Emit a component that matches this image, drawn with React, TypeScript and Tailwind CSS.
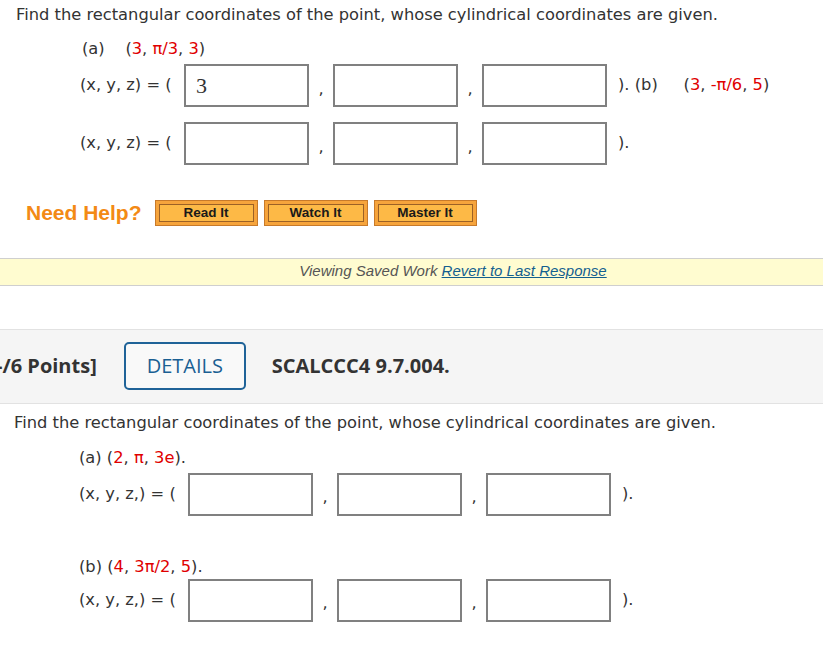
import React from 'react';

const V = { fontFamily: '"DejaVu Sans", Verdana, sans-serif' };
const OS = { fontFamily: '"Open Sans", sans-serif' };
const AR = { fontFamily: '"Liberation Sans", Arial, sans-serif' };

function R({ children }: { children: React.ReactNode }) {
  return <span className="text-[#e00000]">{children}</span>;
}

function Box({ value }: { value?: string }) {
  return (
    <div className="w-[125px] h-[43px] border-2 border-[#808080] bg-white flex items-center px-[10px]">
      {value && (
        <span className="text-[22px] text-[#333]" style={{ fontFamily: '"Liberation Serif", serif' }}>
          {value}
        </span>
      )}
    </div>
  );
}

function Comma() {
  return <span className="w-[24px] text-center self-end mb-[6px] text-[#333]">,</span>;
}

function Row({ label, boxStart, first, tail }: { label: string; boxStart: number; first?: string; tail: React.ReactNode }) {
  return (
    <div className="flex items-center">
      <span className="whitespace-pre" style={{ width: boxStart }}>{label}</span>
      <Box value={first} />
      <Comma />
      <Box />
      <Comma />
      <Box />
      <span className="ml-[11px] whitespace-pre">{tail}</span>
    </div>
  );
}

function HelpBtn({ label, w }: { label: string; w: number }) {
  return (
    <div className="h-[26px] border border-[#c87a2a] bg-[#f6a43c] p-[3px]" style={{ width: w }}>
      <div
        className="h-full border border-[#9c6126] bg-[#fdb946] flex items-center justify-center text-[13.5px] font-bold text-[#1a1a1a]"
        style={AR}
      >
        {label}
      </div>
    </div>
  );
}

export default function App() {
  return (
    <div className="w-[823px] h-[657px] overflow-hidden bg-white text-[#333] text-[16.3px]" style={V}>
      <div className="pl-[16px] pt-[4px] leading-[22px]">
        Find the rectangular coordinates of the point, whose cylindrical coordinates are given.
      </div>
      <div className="pl-[82px] mt-[12px] leading-[22px] whitespace-pre">
        (a)    (<R>3</R>, <R>π/3</R>, <R>3</R>)
      </div>
      <div className="pl-[80px] mt-[4px]">
        <Row
          label="(x, y, z) = ("
          boxStart={104}
          first="3"
          tail={
            <>
              ). (b)     (<R>3</R>, <R>-π/6</R>, <R>5</R>)
            </>
          }
        />
      </div>
      <div className="pl-[80px] mt-[15px]">
        <Row label="(x, y, z) = (" boxStart={104} tail=")." />
      </div>

      <div className="flex items-center gap-[6px] pl-[26px] mt-[32px]">
        <span className="text-[21px] font-bold text-[#f38a15] mr-[7px]" style={AR}>
          Need Help?
        </span>
        <HelpBtn label="Read It" w={103} />
        <HelpBtn label="Watch It" w={104} />
        <HelpBtn label="Master It" w={103} />
      </div>

      <div
        className="mt-[29px] h-[28px] border-y border-[#cfcfcf] bg-[#fffcd0] flex items-center justify-center text-[15px] italic text-[#555]"
        style={AR}
      >
        <span className="ml-[83px]">
          Viewing Saved Work{' '}
          <span className="underline text-[#135f8f]">Revert to Last Response</span>
        </span>
      </div>

      <div className="mt-[43px] h-[75px] border-y border-[#e2e2e2] bg-[#f5f5f5] flex items-center" style={OS}>
        <span className="ml-[-4px] text-[20px] font-bold text-[#333]">-/6 Points]</span>
        <div className="ml-[27px] w-[122px] h-[48px] border-2 border-[#1f6398] rounded-[5px] flex items-center justify-center text-[20px] text-[#1a5f93] bg-white/40">
          DETAILS
        </div>
        <span className="ml-[26px] text-[20px] font-bold text-[#333]">SCALCCC4 9.7.004.</span>
      </div>

      <div className="pl-[14px] mt-[8px] leading-[22px]">
        Find the rectangular coordinates of the point, whose cylindrical coordinates are given.
      </div>
      <div className="pl-[79px] mt-[13px] leading-[22px]">
        (a) (<R>2</R>, <R>π</R>, <R>3e</R>).
      </div>
      <div className="pl-[79px] mt-[4px]">
        <Row label="(x, y, z,) = (" boxStart={109} tail=")." />
      </div>
      <div className="pl-[79px] mt-[40px] leading-[22px]">
        (b) (<R>4</R>, <R>3π/2</R>, <R>5</R>).
      </div>
      <div className="pl-[79px] mt-[1px]">
        <Row label="(x, y, z,) = (" boxStart={109} tail=")." />
      </div>
    </div>
  );
}
